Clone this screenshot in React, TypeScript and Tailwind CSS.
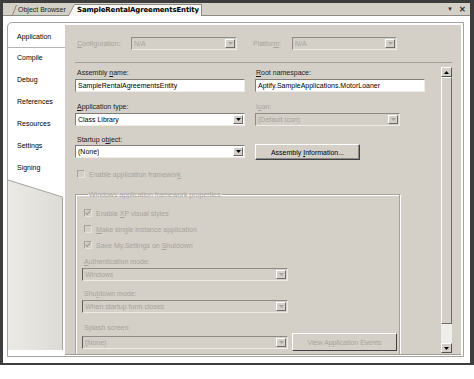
import React from 'react'
import clsx from 'clsx'

const GRAY_TEXT = 'text-[#a6a39b]'

function DropBtn({ disabled }: { disabled?: boolean }) {
  return (
    <div className="ml-auto mr-[1px] w-[10px] h-[9px] shrink-0 bg-[#d4d0c8] border border-t-white border-l-white border-r-[#6e6c68] border-b-[#6e6c68] flex items-center justify-center">
      <svg width="5" height="3" viewBox="0 0 5 3">
        <path d="M0 0h5L2.5 3z" fill={disabled ? '#a8a59e' : '#000'} />
      </svg>
    </div>
  )
}

function Combo({ value, className, disabled }: { value: string; className: string; disabled?: boolean }) {
  return (
    <div
      className={clsx(
        'h-[13px] flex items-center border pl-[2px] shrink-0',
        disabled
          ? 'bg-[#d4d0c8] text-[#a6a39b] border-[#8e8c87] border-r-[#ecebe7] border-b-[#ecebe7]'
          : 'bg-white text-black border-[#7f7d78] border-r-[#ecebe7] border-b-[#ecebe7]',
        className
      )}
    >
      <span className="truncate">{value}</span>
      <DropBtn disabled={disabled} />
    </div>
  )
}

function TextBox({ value }: { value: string }) {
  return (
    <div className="h-[13px] w-[170px] bg-white border border-[#7f7d78] border-r-[#ecebe7] border-b-[#ecebe7] pl-[2px] flex items-center text-black">
      {value}
    </div>
  )
}

function Check({ checked, children }: { checked?: boolean; children: React.ReactNode }) {
  return (
    <div className={clsx('h-[10px] flex items-center gap-[4px]', GRAY_TEXT)}>
      <div className="w-[8px] h-[8px] border border-[#a6a39b] border-r-[#e4e2dd] border-b-[#e4e2dd] bg-[#d4d0c8] flex items-center justify-center">
        {checked && (
          <svg width="6" height="6" viewBox="0 0 6 6">
            <path d="M0.6 2.6l1.7 1.9 3.1-3.9" stroke="#a39f97" strokeWidth="1.3" fill="none" />
          </svg>
        )}
      </div>
      <span>{children}</span>
    </div>
  )
}

function ScrollBtn({ up }: { up?: boolean }) {
  return (
    <div className="h-[10px] bg-[#d4d0c8] border border-t-white border-l-white border-r-[#555350] border-b-[#555350] flex items-center justify-center">
      <svg width="5" height="3" viewBox="0 0 5 3">
        <path d={up ? 'M0 3h5L2.5 0z' : 'M0 0h5L2.5 3z'} fill="#000" />
      </svg>
    </div>
  )
}

const sideTabs = ['Compile', 'Debug', 'References', 'Resources', 'Settings', 'Signing']

export default function App() {
  return (
    <div className="w-[474px] h-[379px] bg-white text-[7px] leading-[9px] text-[#1a1a1a] font-['Liberation_Sans',Arial,sans-serif]">
      <div className="h-[365px] flex flex-col border-t-[3px] border-l-[3px] border-r-[4px] border-b-[2px] border-[#3e3e3e]">
        {/* document tab strip */}
        <div className="h-[13px] shrink-0 flex items-end bg-[#d4d0c8] border-b border-[#8c8a84] pl-[9px]">
          <svg width="5" height="11" className="shrink-0">
            <path d="M0.5 11L4.5 1" stroke="#8c8a84" />
          </svg>
          <div className="h-[12px] w-[51px] flex items-center pl-[1px] text-[#222]">Object Browser</div>
          <svg width="7" height="12" className="shrink-0 -mb-px">
            <path d="M0 12L6.5 0.5H7V12z" fill="#f7f6f2" />
            <path d="M0.3 12L6.5 0.5" stroke="#8c8a84" />
          </svg>
          <div className="h-[12px] w-[127px] -mb-px bg-[#f7f6f2] border-t border-r border-[#8c8a84] flex items-center pl-[2px] font-bold text-black font-['DejaVu_Sans',sans-serif] tracking-[-0.15px]">
            SampleRentalAgreementsEntity
          </div>
          <div className="ml-auto h-[12px] flex items-center gap-[6px] pr-[4px] text-[8px] text-[#333]">
            <span className="text-[6px]">▼</span>
            <span className="font-bold">✕</span>
          </div>
        </div>

        {/* body */}
        <div className="flex-1 flex bg-white pt-[6px] pl-[4px] pr-[6px] pb-[6px] min-h-0">
          <div className="flex-1 flex border border-[#a5a39d] rounded-tl-[5px] bg-white pt-[2px] pr-[2px] pb-[1px] min-h-0">
            {/* side tabs */}
            <div className="w-[57px] shrink-0 relative">
              <svg className="absolute inset-0" width="57" height="325">
                <defs>
                  <linearGradient id="lowTab" x1="0" x2="1" y1="0" y2="0">
                    <stop offset="0" stopColor="#eceae5" />
                    <stop offset="1" stopColor="#dddbd5" />
                  </linearGradient>
                </defs>
                <path d="M0 155L54 172V325H0z" fill="url(#lowTab)" />
                <path d="M0 155L54.5 172V325" stroke="#a5a39d" fill="none" />
              </svg>
              <div className="relative flex flex-col">
                <div className="h-[23px] border-b border-[#b5b3ad] flex items-center pl-[9px] text-black">Application</div>
                <div className="-mt-[2px] flex flex-col">
                  {sideTabs.map((t) => (
                    <div key={t} className="h-[22px] flex items-center pl-[9px] text-black">
                      {t}
                    </div>
                  ))}
                </div>
              </div>
            </div>

            {/* page */}
            <div className="flex-1 bg-[#d4d0c8] flex flex-col border-b border-[#9f9d97] min-h-0">
              <div className="h-[37px] shrink-0 flex items-start pt-[12px] pl-[12px]">
                <span className={clsx('w-[54px] h-[13px] flex items-center', GRAY_TEXT)}>
                  <span><u>C</u>onfiguration:</span>
                </span>
                <Combo disabled value="N/A" className="w-[106px]" />
                <span className={clsx('ml-[16px] w-[39px] h-[13px] flex items-center', GRAY_TEXT)}>
                  <span>Platfor<u>m</u>:</span>
                </span>
                <Combo disabled value="N/A" className="w-[105px]" />
              </div>

              <div className="flex-1 flex ml-[10px] mr-[9px] border-t border-[#a3a19b] min-h-0">
                <div className="flex-1 overflow-hidden pt-[5px]">
                  {/* row 1 */}
                  <div className="flex gap-[10px]">
                    <div className="w-[170px]">
                      <div className="h-[9px] pl-[2px]">Assembly <u>n</u>ame:</div>
                      <div className="mt-[2px]"><TextBox value="SampleRentalAgreementsEntity" /></div>
                    </div>
                    <div className="w-[170px]">
                      <div className="h-[9px] pl-[1px]"><u>R</u>oot namespace:</div>
                      <div className="mt-[2px]"><TextBox value="Aptify.SampleApplications.MotorLoaner" /></div>
                    </div>
                  </div>
                  {/* row 2 */}
                  <div className="flex gap-[10px] mt-[10px]">
                    <div className="w-[170px]">
                      <div className="h-[9px] pl-[2px]"><u>A</u>pplication type:</div>
                      <div className="mt-[2px]"><Combo value="Class Library" className="w-[170px]" /></div>
                    </div>
                    <div className="w-[170px]">
                      <div className="h-[9px] pl-[1px] text-[#a6a39b]">I<u>c</u>on:</div>
                      <div className="mt-[2px]"><Combo disabled value="(Default Icon)" className="w-[145px]" /></div>
                    </div>
                  </div>
                  {/* row 3 */}
                  <div className="flex gap-[10px] mt-[9px] items-start">
                    <div className="w-[170px]">
                      <div className="h-[9px] pl-[2px]">Startup o<u>b</u>ject:</div>
                      <div className="mt-[1px]"><Combo value="(None)" className="w-[170px]" /></div>
                    </div>
                    <div className="w-[170px] pt-[9px]">
                      <div className="w-[105px] h-[16px] bg-[#d4d0c8] border border-t-white border-l-white border-r-[#404040] border-b-[#404040] shadow-[inset_-1px_-1px_0_#8c8a84] flex items-center justify-center text-black">
                        <span>Assembly <u>I</u>nformation...</span>
                      </div>
                    </div>
                  </div>
                  {/* framework */}
                  <div className="mt-[9px] ml-[2px]">
                    <Check>Enable application framewor<u>k</u></Check>
                  </div>
                  <fieldset className="mt-[11px] w-[325px] h-[220px] border border-[#a3a19b] shadow-[inset_1px_1px_0_#fff,1px_1px_0_#fff] pl-[7px]">
                    <legend className={clsx('ml-[5px] px-[1px] h-[9px] leading-[9px]', GRAY_TEXT)}>
                      Windows application framework properties
                    </legend>
                    <div className="pt-[9px] ml-[1px] flex flex-col gap-[6px]">
                      <Check checked>Enable <u>X</u>P visual styles</Check>
                      <Check><u>M</u>ake single instance application</Check>
                      <Check checked>Save My.Settings on <u>S</u>hutdown</Check>
                    </div>
                    <div className={clsx('mt-[7px] h-[9px] pl-[1px]', GRAY_TEXT)}><u>A</u>uthentication mode:</div>
                    <div className="mt-[2px] -ml-[1px]"><Combo disabled value="Windows" className="w-[206px] border-l-[#5f5d59]" /></div>
                    <div className={clsx('mt-[8px] h-[9px] pl-[1px]', GRAY_TEXT)}>Shu<u>t</u>down mode:</div>
                    <div className="mt-[2px] -ml-[1px]"><Combo disabled value="When startup form closes" className="w-[206px] border-l-[#5f5d59]" /></div>
                    <div className={clsx('mt-[10px] h-[9px] pl-[1px]', GRAY_TEXT)}>Splash screen:</div>
                    <div className="mt-[1px] -ml-[1px] flex items-center gap-[4px]">
                      <Combo disabled value="(None)" className="w-[206px] border-l-[#5f5d59]" />
                      <div className={clsx('w-[105px] h-[18px] bg-[#d4d0c8] border border-t-white border-l-white border-r-[#404040] border-b-[#404040] flex items-center justify-center', GRAY_TEXT)}>
                        View Application Events
                      </div>
                    </div>
                  </fieldset>
                </div>

                {/* scrollbar */}
                <div className="w-[11px] shrink-0 flex flex-col mt-[4px] mb-[1px]">
                  <ScrollBtn up />
                  <div className="flex-1 bg-[#d4d0c8] border border-t-white border-l-white border-r-[#6e6c68] border-b-[#6e6c68]" />
                  <div className="h-[19px] bg-[#efeeea]" />
                  <ScrollBtn />
                </div>
              </div>
            </div>
          </div>
        </div>
      </div>
    </div>
  )
}
